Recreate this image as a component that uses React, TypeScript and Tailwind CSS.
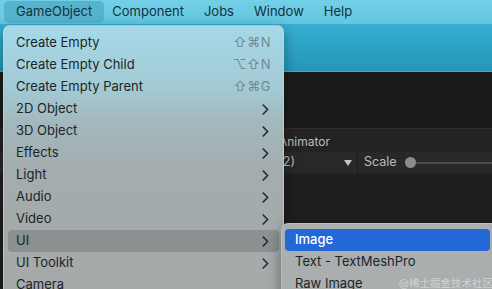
import React from "react";

const font = { fontFamily: "Inter, 'Noto Sans CJK SC', sans-serif" };

const Chevron = () => (
  <svg width="7" height="11" viewBox="0 0 7 11" className="shrink-0">
    <path d="M1.2 1 L5.6 5.5 L1.2 10" fill="none" stroke="#1f2a2e" strokeWidth="1.6" strokeLinecap="round" strokeLinejoin="round" />
  </svg>
);

type Item = { label: string; shortcut?: string; sub?: boolean; active?: boolean };

const items: Item[] = [
  { label: "Create Empty", shortcut: "⇧⌘N" },
  { label: "Create Empty Child", shortcut: "⌥⇧N" },
  { label: "Create Empty Parent", shortcut: "⇧⌘G" },
  { label: "2D Object", sub: true },
  { label: "3D Object", sub: true },
  { label: "Effects", sub: true },
  { label: "Light", sub: true },
  { label: "Audio", sub: true },
  { label: "Video", sub: true },
  { label: "UI", sub: true, active: true },
  { label: "UI Toolkit", sub: true },
  { label: "Camera" },
];

const menus = ["GameObject", "Component", "Jobs", "Window", "Help"];

export default function App() {
  return (
    <div className="relative w-[492px] h-[289px] overflow-hidden bg-[#1c1c1c]" style={font}>
      {/* menu bar */}
      <div className="h-[24px] flex items-center pl-[4px] bg-gradient-to-b from-[#72d0e7] to-[#63c6e1] text-[13px] text-[#15323f]">
        {menus.map((m, i) => (
          <div
            key={m}
            className={
              i === 0
                ? "h-[22px] flex items-center px-[12px] mr-[0px] rounded-[5px] bg-[#56b3ce]"
                : "h-[22px] flex items-center pl-[8px] pr-[12px]"
            }
          >
            {m}
          </div>
        ))}
      </div>

      {/* toolbar band */}
      <div className="h-[48px] bg-gradient-to-b from-[#36afd2] to-[#2496b9] border-b border-[#7d969d]" />

      {/* dark editor */}
      <div className="h-[57px] bg-[#1b1b1b] border-b border-[#2d2d2d]" />
      <div className="h-[23px] bg-[#232323] flex items-end pl-[279px] pb-[1px] text-[12px] text-[#bdbdbd]">Animator</div>
      <div className="h-[21px] bg-[#282828] flex items-center text-[12.5px] text-[#bcbcbc]">
        <div className="w-[358px] h-full flex items-center justify-end pr-[5px] border-r border-[#1c1c1c]">
          <span>Free Aspect (32)</span>
          <span className="w-[49px]" />
          <svg width="8" height="6" viewBox="0 0 8 6">
            <path d="M0 0 H8 L4 6 Z" fill="#c4c4c4" />
          </svg>
        </div>
        <span className="ml-[6px]">Scale</span>
        <div className="flex items-center ml-[8px] flex-1">
          <div className="w-[11px] h-[11px] rounded-full bg-[#8c8c8c]" />
          <div className="flex-1 h-[2px] bg-[#4b4b4b]" />
        </div>
      </div>
      <div className="h-[200px] bg-[#1f1f1f]" />

      {/* GameObject menu */}
      <div className="absolute left-[3px] top-[25px] w-[281px] h-[280px] rounded-[7px] pt-[6px] px-[4px] border border-[#b9dbe4]/60 shadow-[0_4px_14px_rgba(0,0,0,0.35)] bg-[linear-gradient(to_bottom,#a6d9e8_0%,#a3cad4_22%,#a2b8bd_35%,#a4acad_52%,#a6a9a9_100%)] text-[13px] text-[#1b2529]">
        {items.map((it) => (
          <div
            key={it.label}
            className={
              "h-[22px] flex items-center pl-[8px] pr-[10px] rounded-[4px] " +
              (it.active ? "bg-[#8b9091]" : "")
            }
          >
            <span className="flex-1">{it.label}</span>
            {it.shortcut && <span className="text-[#6c8a93] tracking-[0.5px] mr-[-2px]">{it.shortcut}</span>}
            {it.sub && <Chevron />}
          </div>
        ))}
      </div>

      {/* UI submenu */}
      <div className="absolute left-[281px] top-[223px] w-[220px] h-[80px] rounded-[7px] pt-[5px] px-[3px] bg-[#aaaeae] border border-[#c2c6c6]/70 shadow-[0_4px_14px_rgba(0,0,0,0.4)] text-[13px] text-[#1b2529]">
        <div className="h-[22px] w-[205px] flex items-center pl-[10px] rounded-[4px] bg-[#2467d6] text-white font-medium">Image</div>
        <div className="h-[22px] flex items-center pl-[10px]">Text - TextMeshPro</div>
        <div className="h-[22px] flex items-center pl-[10px]">
          <span className="flex-1">Raw Image</span>
          {/* watermark */}
          <span className="mr-[4px] text-[10.5px] text-[#dcdede]/80">@稀土掘金技术社区</span>
        </div>
      </div>
    </div>
  );
}
